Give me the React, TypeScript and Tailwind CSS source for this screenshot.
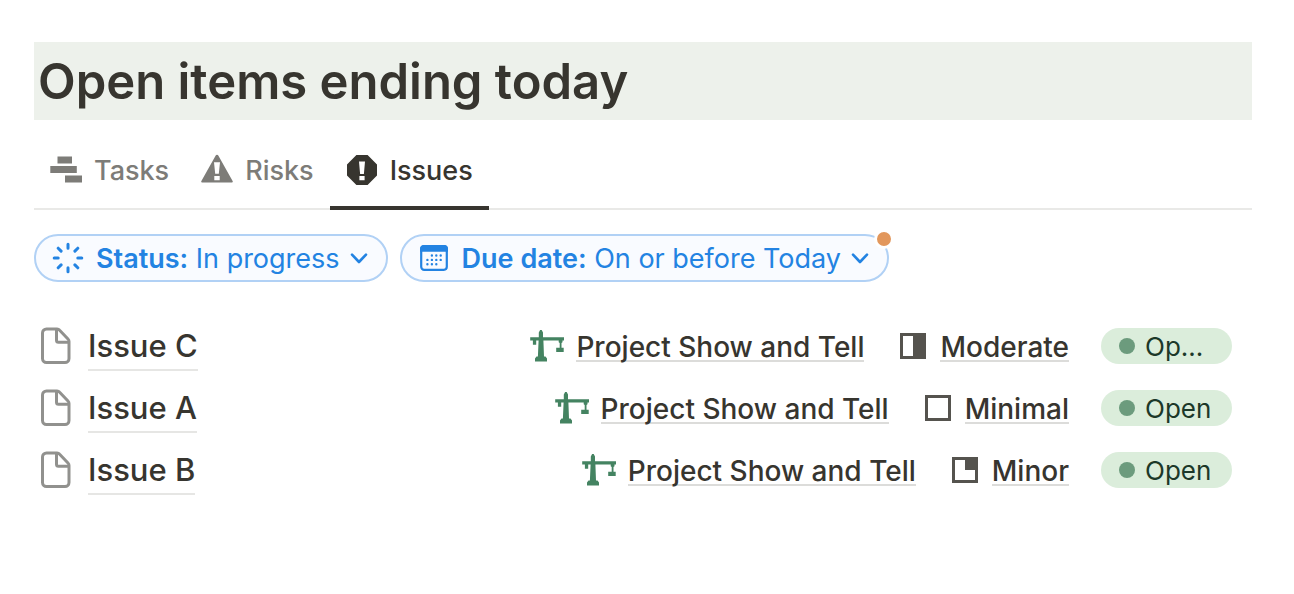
import { useState } from "react";
import clsx from "clsx";

type Severity = "Moderate" | "Minimal" | "Minor";

interface Issue {
  title: string;
  project: string;
  severity: Severity;
  status: string;
}

const issues: Issue[] = [
  { title: "Issue C", project: "Project Show and Tell", severity: "Moderate", status: "Op..." },
  { title: "Issue A", project: "Project Show and Tell", severity: "Minimal", status: "Open" },
  { title: "Issue B", project: "Project Show and Tell", severity: "Minor", status: "Open" },
];

function TasksIcon() {
  return (
    <svg width="32" height="32" viewBox="0 0 32 32" fill="currentColor" aria-hidden="true">
      <path d="M7.5 2.500h14.500v7h-14.500zM0.300 12h26.500v7H.300zM15 21.500h17v7H15z" />
    </svg>
  );
}

function RisksIcon() {
  return (
    <svg width="32" height="32" viewBox="0 0 32 32" fill="currentColor" aria-hidden="true">
      <path
        fillRule="evenodd"
        d="M16 .7c.6 0 1 .3 1.300.8l14.300 25.400c.5.9 0 1.700-1 1.700H1.400c-1 0-1.500-.8-1-1.700L14.700 1.500c.3-.5.7-.8 1.300-.8zM13 8.200l1.200 11.600h3.600l1.200-11.600zM13.300 22v4.300h5.400V22z"
      />
    </svg>
  );
}

function IssuesIcon() {
  return (
    <svg width="32" height="32" viewBox="-1 -1 32 32" fill="currentColor" aria-hidden="true">
      <path
        fillRule="evenodd"
        d="M9.4 0h11.200L30 9.400v11.200L20.600 30H9.400L0 20.600V9.400zM12 6.600l1.100 12.400h3.800L18 6.600zM12.400 21v4.200h5.200V21z"
      />
    </svg>
  );
}

function StatusIcon() {
  return (
    <svg width="32" height="32" viewBox="0 0 32 32" fill="none" stroke="currentColor" strokeWidth="3" strokeLinecap="round" aria-hidden="true">
      <path d="M16 2.200v4M16 25.800v4M2.200 16h4M25.800 16h4M6.200 6.200l2.900 2.900M22.900 22.900l2.900 2.900M6.200 25.800l2.900-2.900M22.900 9.100l2.900-2.900" />
    </svg>
  );
}

function CalendarIcon() {
  return (
    <svg width="28" height="26" viewBox="0 0 28 26" aria-hidden="true">
      <rect x="1.200" y="1.200" width="25.600" height="23.600" rx="3" fill="none" stroke="currentColor" strokeWidth="2.200" />
      <path d="M0 6.800V4a4 4 0 0 1 4-4h20a4 4 0 0 1 4 4v2.800z" fill="currentColor" />
      <path
        d="M11.900 10.500h.01M16.300 10.500h.01M20.700 10.500h.01M7.400 14.900h.01M11.900 14.900h.01M16.300 14.900h.01M20.700 14.900h.01M7.400 19.300h.01M11.900 19.300h.01M16.300 19.300h.01"
        stroke="currentColor"
        strokeWidth="2.400"
        strokeLinecap="round"
      />
    </svg>
  );
}

function Chevron() {
  return (
    <svg width="18" height="12" viewBox="0 0 18 12" fill="none" stroke="currentColor" strokeWidth="2.600" strokeLinecap="round" strokeLinejoin="round" aria-hidden="true">
      <path d="M2 2.600l7 7.400 7-7.400" />
    </svg>
  );
}

function PageIcon() {
  return (
    <svg className="shrink-0" width="30" height="38" viewBox="0 0 30 38" fill="none" stroke="#91918e" strokeWidth="3" strokeLinejoin="round" aria-hidden="true">
      <path d="M5.500 2h10.600c.9 0 1.700.3 2.300 1l8.800 9.200c.6.6.8 1.400.8 2.200v17.100a4 4 0 0 1-4 4H5.500a4 4 0 0 1-4-4V6a4 4 0 0 1 4-4z" />
      <path d="M15.500 2v11.200a2 2 0 0 0 2 2H28" />
    </svg>
  );
}

function CraneIcon() {
  return (
    <svg className="shrink-0" width="34" height="32" viewBox="0 0 34 32" fill="#448361" aria-hidden="true">
      <path d="M10.100 0h1.600l1.300 2.600V7.300H34v3.300h-1.500v1.600l-1 .8v4.800h2.200V22h-7.500v-4.200h3.500v-4.800l-1-.8v-1.600H13.400L14 26.400h1.500L17 28.400v3.200H5v-3.200l1.500-2h1.400l.7-15.800H6.200v4.100H2.900v-4.100H.2V7.300h8.600V2.600z" />
    </svg>
  );
}

function SeverityIcon({ severity }: { severity: Severity }) {
  return (
    <svg className="shrink-0" width="26" height="26" viewBox="0 0 26 26" aria-hidden="true">
      <rect x="1.500" y="1.500" width="23" height="23" fill="none" stroke="#55534e" strokeWidth="3" />
      {severity === "Moderate" && <path d="M13 1h12v24H13z" fill="#55534e" />}
      {severity === "Minor" && <path d="M13 1h12v12H13z" fill="#55534e" />}
    </svg>
  );
}

const tabs = [
  { name: "Tasks", Icon: TasksIcon },
  { name: "Risks", Icon: RisksIcon },
  { name: "Issues", Icon: IssuesIcon },
];

const chip =
  "relative flex h-12 items-center rounded-full border-2 border-[#b1d1f5] bg-[#f9fbff] pl-4 pr-[18px] text-[27px] leading-9 text-[#2383e2]";

const relation = "border-b-2 border-[#dcdcda] pt-1";

function IssueRow({ issue }: { issue: Issue }) {
  return (
    <li className="flex h-[62px] items-center pl-[7px] pr-5">
      <PageIcon />
      <a href="#" className="ml-[17px] border-b-2 border-[#e6e6e4] pt-[2px] text-[31px] leading-[46px] font-medium">
        {issue.title}
      </a>
      <div className="ml-auto flex items-center text-[28px] leading-[26px] font-medium">
        <CraneIcon />
        <a href="#" className={clsx("ml-3", relation)}>
          {issue.project}
        </a>
        <span className="ml-9 flex items-center gap-[14px]">
          <SeverityIcon severity={issue.severity} />
          <a href="#" className={relation}>
            {issue.severity}
          </a>
        </span>
      </div>
      <span className="ml-8 flex h-9 w-[131px] items-center gap-[10px] rounded-full bg-[#dbeddb] pl-[18px] text-[26px] leading-9 text-[#1c3829]">
        <span className="size-4 rounded-full bg-[#6c9b7d]" />
        <span className="pt-[2px]">{issue.status}</span>
      </span>
    </li>
  );
}

export default function App() {
  const [active, setActive] = useState("Issues");

  return (
    <main className="min-h-screen bg-white pt-[42px] pr-[42px] pl-[34px] font-['Inter',sans-serif] text-[#37352f]">
      <h1 className="bg-[#edf1eb] px-1 pt-[2px] text-[49px] leading-[76px] font-semibold">Open items ending today</h1>

      {/* views */}
      <div role="tablist" className="mt-3 flex h-[78px] border-b-2 border-[#e9e9e7]">
        {tabs.map(({ name, Icon }) => (
          <button
            key={name}
            role="tab"
            aria-selected={active === name}
            onClick={() => setActive(name)}
            className={clsx(
              "-mb-[2px] flex items-center gap-3 border-b-4 px-4 pt-[2px] text-[27px] leading-9 font-medium",
              active === name ? "border-[#37352f]" : "border-transparent text-[#7d7c78]"
            )}
          >
            <Icon />
            <span className="pt-[2px]">{name}</span>
          </button>
        ))}
      </div>

      {/* filters */}
      <div className="mt-6 flex gap-3">
        <button className={chip}>
          <StatusIcon />
          <span className="ml-3 pt-[2px]">
            <span className="font-semibold">Status:</span> In progress
          </span>
          <span className="ml-[10px]"><Chevron /></span>
        </button>
        <button className={chip}>
          <span className="mx-[2px]"><CalendarIcon /></span>
          <span className="ml-3 pt-[2px]">
            <span className="font-semibold">Due date:</span> On or before Today
          </span>
          <span className="ml-[10px]"><Chevron /></span>
          {/* unsaved changes dot */}
          <span className="absolute -top-[7px] -right-[7px] size-[20px] rounded-full border-[3px] border-white bg-[#e2975c]" />
        </button>
      </div>

      <ul className="mt-[33px]">
        {issues.map((issue) => (
          <IssueRow key={issue.title} issue={issue} />
        ))}
      </ul>
    </main>
  );
}
